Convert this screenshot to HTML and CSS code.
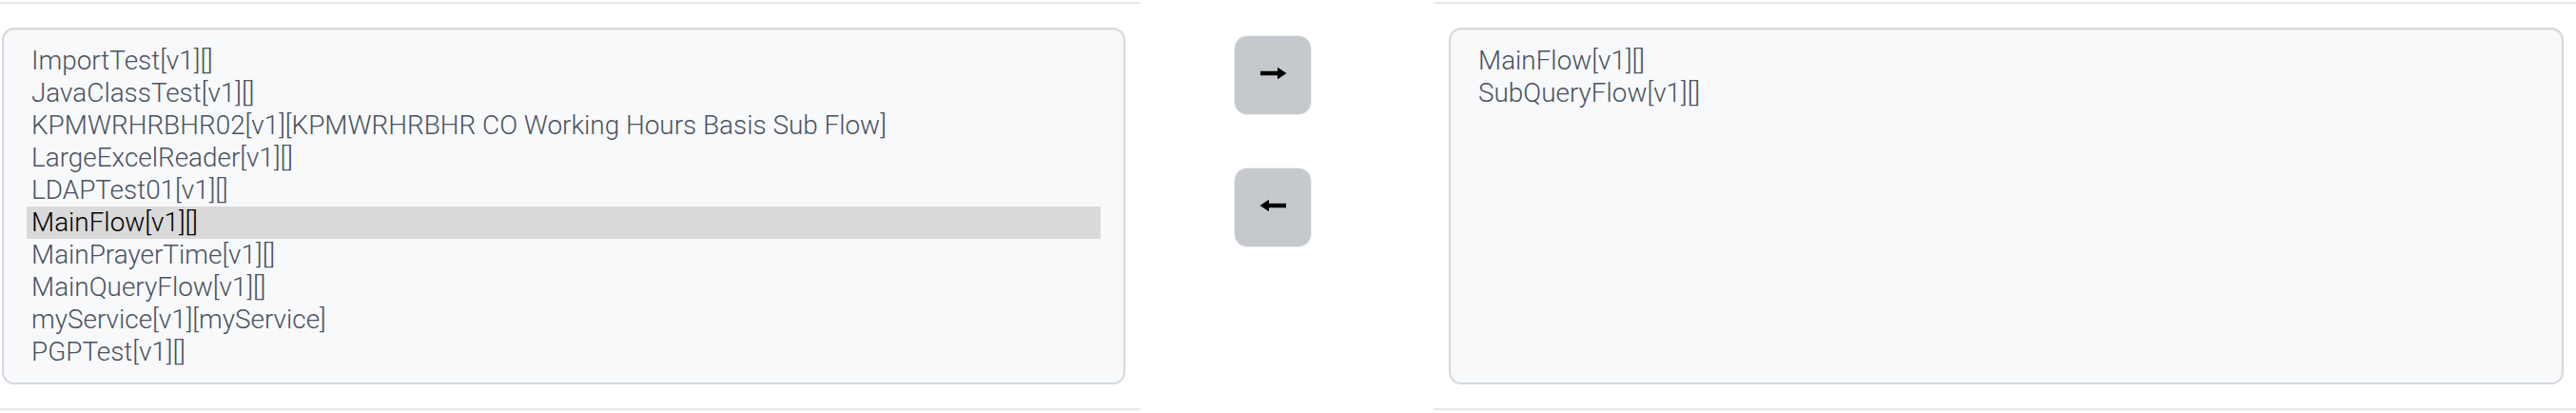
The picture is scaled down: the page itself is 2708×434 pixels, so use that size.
FILE: index.html
```html
<!DOCTYPE html>
<html>
<head>
<meta charset="utf-8">
<link rel="stylesheet" href="styles.css">
</head>
<body>
<div class="picker">
  <div class="col col-left">
    <div class="listbox">
      <div class="opt">ImportTest[v1][]</div>
      <div class="opt">JavaClassTest[v1][]</div>
      <div class="opt">KPMWRHRBHR02[v1][KPMWRHRBHR CO Working Hours Basis Sub Flow]</div>
      <div class="opt">LargeExcelReader[v1][]</div>
      <div class="opt">LDAPTest01[v1][]</div>
      <div class="opt selected">MainFlow[v1][]</div>
      <div class="opt">MainPrayerTime[v1][]</div>
      <div class="opt">MainQueryFlow[v1][]</div>
      <div class="opt">myService[v1][myService]</div>
      <div class="opt">PGPTest[v1][]</div>
    </div>
  </div>
  <div class="mid">
    <button class="move">
      <svg width="29" height="14" viewBox="0 0 29 14"><path d="M1 4.7h18V0.8l9.5 6.2L19 13.2V9.3H1z" fill="#000"/></svg>
    </button>
    <button class="move">
      <svg width="29" height="14" viewBox="0 0 29 14"><path d="M28 4.7H10V0.8L0.5 7l9.5 6.2V9.3h18z" fill="#000"/></svg>
    </button>
  </div>
  <div class="col col-right">
    <div class="listbox">
      <div class="opt">MainFlow[v1][]</div>
      <div class="opt">SubQueryFlow[v1][]</div>
    </div>
  </div>
</div>
</body>
</html>
```
FILE: styles.css
```css
html, body {
  margin: 0;
  padding: 0;
  background: #ffffff;
}
body {
  padding-top: 2px;
  font-family: Roboto, "Liberation Sans", sans-serif;
}
.picker {
  display: flex;
  align-items: flex-start;
}
.col {
  border-top: 2px solid #e6e7eb;
  border-bottom: 2px solid #e6e7eb;
  padding: 25px 0;
}
.col-left {
  width: 1199px;
  padding-left: 2px;
  padding-right: 16px;
  box-sizing: border-box;
}
.col-right {
  width: 1201px;
  padding-left: 16px;
  padding-right: 13px;
  box-sizing: border-box;
}
.listbox {
  height: 375px;
  box-sizing: border-box;
  border: 2px solid #d5d8dd;
  border-radius: 13px;
  background: #f8f9fb;
  box-shadow: inset 0 1px 2px rgba(0, 0, 0, 0.06);
  padding: 16px 24px;
}
.opt {
  font-size: 27.9px;
  font-weight: 300;
  line-height: 34px;
  color: #4a5260;
  padding-left: 5px;
  white-space: nowrap;
}
.opt.selected {
  background: #dadada;
  color: #000000;
}
.mid {
  width: 308px;
  padding-left: 98px;
  padding-top: 35px;
  box-sizing: border-box;
  display: flex;
  flex-direction: column;
  gap: 55px;
}
.move {
  width: 82px;
  height: 84px;
  border: 1px solid #eef0f3;
  border-radius: 14px;
  background: #c5c8cd;
  padding: 0;
  display: flex;
  align-items: center;
  justify-content: center;
}
.move svg {
  display: block;
  margin-top: -5px;
}
```
